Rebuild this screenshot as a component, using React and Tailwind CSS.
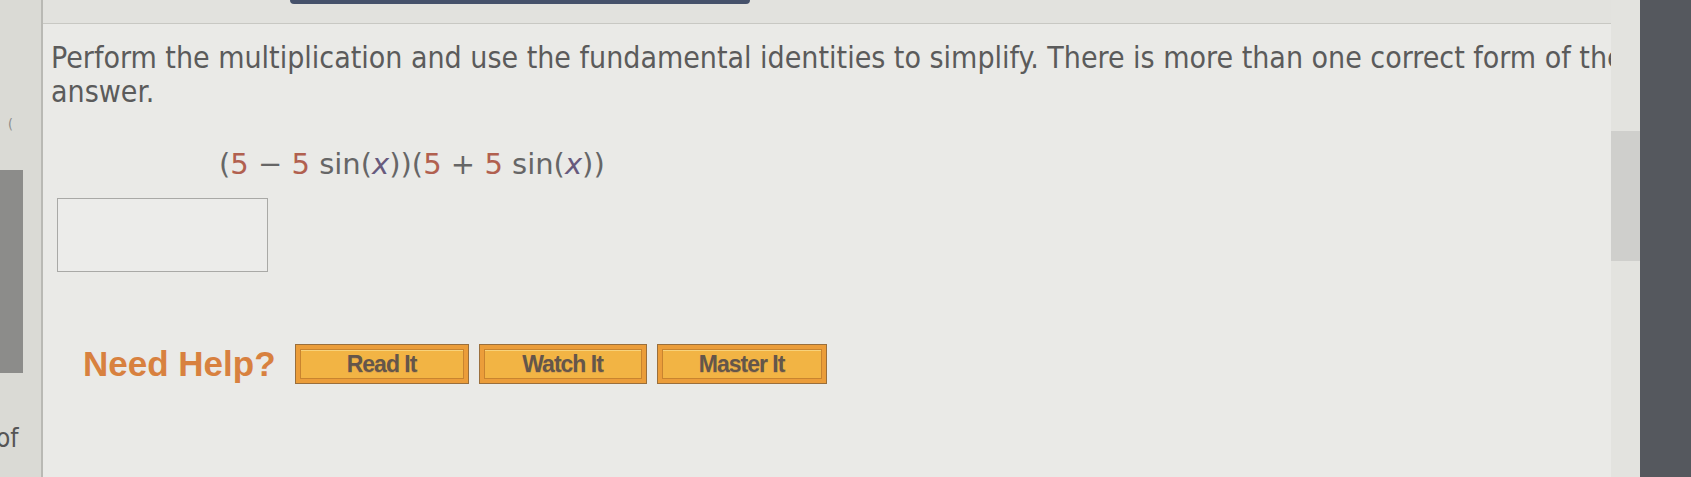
import React from 'react'

const sans = { fontFamily: '"DejaVu Sans Condensed", "DejaVu Sans", Verdana, sans-serif' }
const math = { fontFamily: '"DejaVu Sans", Verdana, sans-serif' }

const HelpButton = ({ label, width }) => (
  <div className={`${width} h-[40px] border border-[#9a6f3c] bg-[#eb9d3a] p-[4px]`}>
    <div className="flex h-full items-center justify-center border border-[#c9842f] bg-[#f2b444] shadow-[inset_0_1px_0_#f8d27a]">
      <span
        className="text-[23px] font-bold tracking-[-1px] text-[#64564a] [text-shadow:0_1px_0_#d9a04a]"
        style={{ fontFamily: '"Liberation Sans", Arial, sans-serif' }}
      >
        {label}
      </span>
    </div>
  </div>
)

export default function App() {
  return (
    <div className="flex h-[477px] w-[1691px] overflow-hidden bg-[#e4e4e0]">
      {/* left strip */}
      <div className="flex w-[41px] shrink-0 flex-col bg-[#dadad5]">
        <span className="ml-[8px] mt-[116px] text-[14px] leading-[16px] text-[#8a8a88]" style={sans}>(</span>
        <div className="mt-[38px] h-[203px] w-[23px] bg-[#8c8c8a]" />
        <span className="-ml-[4px] mt-[52px] text-[26px] leading-[26px] text-[#555]" style={sans}>of</span>
      </div>
      <div className="w-[2px] shrink-0 bg-[#b9b9b4]" />

      {/* main */}
      <div className="flex w-[1568px] shrink-0 flex-col">
        <div className="h-[24px] shrink-0 border-b border-[#c8c8c3] bg-[#e2e2de]">
          <div className="ml-[247px] h-[4px] w-[460px] rounded-b-sm bg-[#46526b]" />
        </div>
        <div className="flex flex-1 flex-col overflow-hidden bg-[#eaeae7] pl-[8px] pt-[17px]" style={sans}>
          <p className="whitespace-nowrap text-[30px] leading-[34px] text-[#5b5b5b]">
            Perform the multiplication and use the fundamental identities to simplify. There is more than one correct form of the
          </p>
          <p className="text-[30px] leading-[34px] text-[#5b5b5b]">answer.</p>

          <div className="ml-[168px] mt-[38px] whitespace-nowrap text-[29px] leading-[34px] text-[#666]" style={math}>
            (<span className="text-[#b1604f]">5</span> − <span className="text-[#b1604f]">5</span> sin(
            <span className="italic text-[#675a7d]">x</span>))(<span className="text-[#b1604f]">5</span> +{' '}
            <span className="text-[#b1604f]">5</span> sin(<span className="italic text-[#675a7d]">x</span>))
          </div>

          <div className="ml-[6px] mt-[17px] h-[74px] w-[211px] border border-[#a9a9a6] bg-[#ececea]" />

          <div className="mt-[72px] flex items-center">
            <span
              className="ml-[32px] mr-[19px] text-[35px] font-bold leading-[40px] text-[#d8813f]"
              style={{ fontFamily: '"Liberation Sans", Arial, sans-serif' }}
            >
              Need Help?
            </span>
            <div className="flex gap-[10px]">
              <HelpButton label="Read It" width="w-[174px]" />
              <HelpButton label="Watch It" width="w-[168px]" />
              <HelpButton label="Master It" width="w-[170px]" />
            </div>
          </div>
        </div>
      </div>

      {/* scrollbar gutter */}
      <div className="w-[29px] shrink-0 bg-[#e3e3df]">
        <div className="mt-[131px] h-[130px] w-full bg-[#cfcfcc]" />
      </div>

      {/* bezel */}
      <div className="flex-1 bg-[#55585e]" />
    </div>
  )
}
